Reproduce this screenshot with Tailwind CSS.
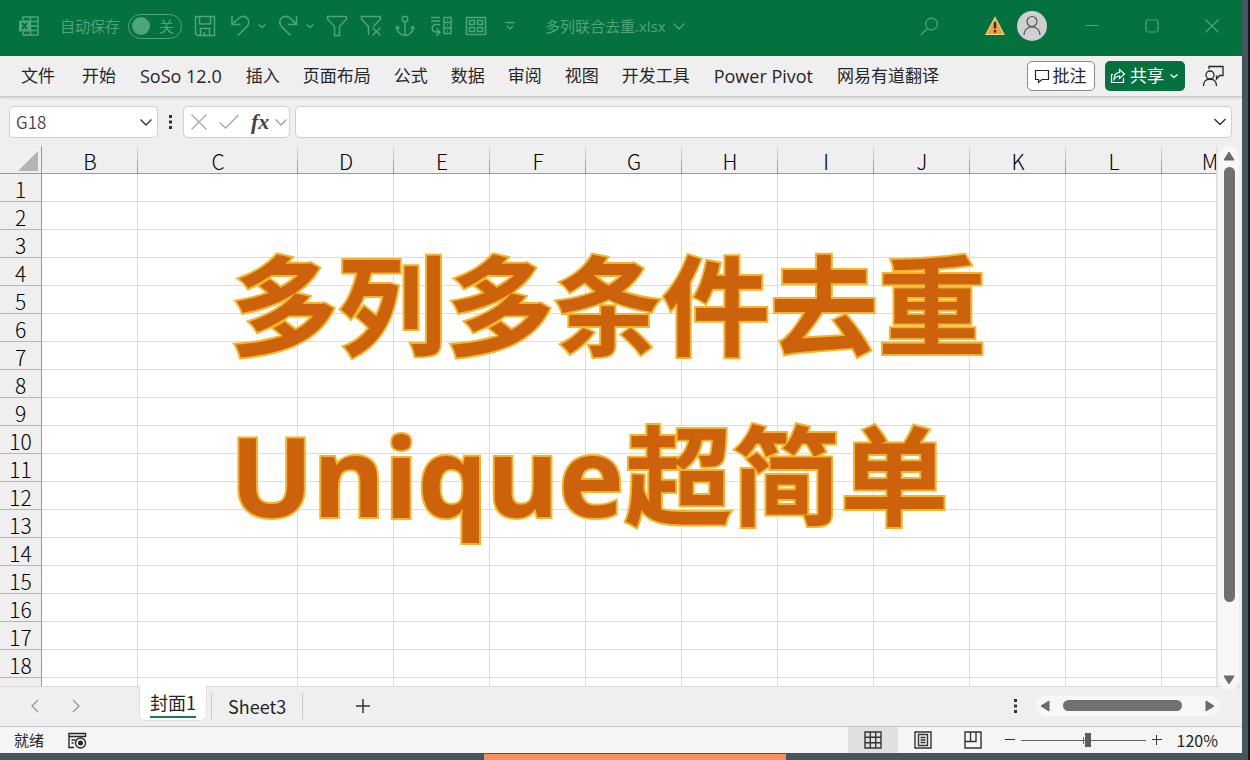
<!DOCTYPE html>
<html lang="zh">
<head>
    <meta charset="UTF-8">
    <meta name="viewport" content="width=device-width, initial-scale=1.0">
    <title>多列联合去重.xlsx - Excel</title>
    <script src="https://cdn.jsdelivr.net/npm/@tailwindcss/browser@4"></script>
</head>
<body class="h-screen overflow-hidden bg-[#44565f] font-['Open_Sans','Noto_Sans_CJK_SC',sans-serif] text-[#262626]">
<div class="relative flex h-full border-r-2 border-[#15191b] pr-[6px] pb-[7px]">
<div class="flex min-w-0 flex-1 flex-col bg-[#efefef]">

    <!-- 标题栏 -->
    <header class="flex h-14 shrink-0 items-center bg-[#05713f] pb-1 pl-[18px] text-[15px] text-[#4da57a]">
        <svg class="size-[22px] shrink-0" viewBox="0 0 22 22" fill="none" stroke="currentColor" stroke-width="1.5">
            <path d="M5 5V2h15v18H5v-3M12.500 2v18M5 6.500h15M12 11h8M5 15.500h15"/>
            <path d="M1 5.500h11v11H1z" fill="currentColor" stroke="none"/>
            <path d="m4 8 5 6M9 8l-5 6" stroke="#05713f" stroke-width="2"/>
        </svg>
        <label for="autosave" class="ml-5 shrink-0">自动保存</label>
        <button id="autosave" role="switch" aria-checked="false" class="ml-2 flex h-[25px] w-[54px] shrink-0 items-center justify-between rounded-full border border-[#4da57a] pr-[7px] pl-[3px]">
            <span class="size-[18px] rounded-full bg-[#4da57a]"></span><span>关</span>
        </button>
        <button class="ml-3 shrink-0" aria-label="保存">
            <svg class="size-[22px]" viewBox="0 0 22 22" fill="none" stroke="currentColor" stroke-width="1.500"><path d="M1.500 1.500h19v19h-17l-2-2zM5.500 1.500V9h11V1.500M6.500 20.500v-7h9v7M10 17v3.500"/></svg>
        </button>
        <button class="ml-[14px] shrink-0" aria-label="撤消">
            <svg class="size-[22px]" viewBox="0 0 22 22" fill="none" stroke="currentColor" stroke-width="1.600"><path d="M2 1v8.500h8.500M2 9.500 9 3c3-2.500 6.500-2 8.500.5s1.500 6-.5 8L8 20.500"/></svg>
        </button>
        <button class="ml-[6px] shrink-0" aria-label="撤消列表">
            <svg class="size-2" viewBox="0 0 8 8" fill="none" stroke="currentColor" stroke-width="1.500"><path d="m.5 2.500 3.500 3 3.500-3"/></svg>
        </button>
        <button class="ml-3 shrink-0" aria-label="恢复">
            <svg class="size-[22px]" viewBox="0 0 22 22" fill="none" stroke="currentColor" stroke-width="1.600"><path d="M18.500 1v8.500H10M18.500 9.500 12 3C9 .5 5 1 3 3.500s-1.500 6 .5 8l9 9"/></svg>
        </button>
        <button class="ml-[6px] shrink-0" aria-label="恢复列表">
            <svg class="size-2" viewBox="0 0 8 8" fill="none" stroke="currentColor" stroke-width="1.500"><path d="m.5 2.500 3.500 3 3.500-3"/></svg>
        </button>
        <button class="ml-3 shrink-0" aria-label="筛选">
            <svg class="size-[22px]" viewBox="0 0 22 22" fill="none" stroke="currentColor" stroke-width="1.500"><path d="M1.500 1.500h19V4l-7 7.500v9H8.500v-9L1.500 4z"/></svg>
        </button>
        <button class="ml-3 shrink-0" aria-label="清除筛选">
            <svg class="size-[22px]" viewBox="0 0 22 22" fill="none" stroke="currentColor" stroke-width="1.500"><path d="M8.500 20v-8.500L1.500 4V1.500h19V4l-7 7.500M12.500 12.500l8 8M20.500 12.500l-8 8"/></svg>
        </button>
        <button class="ml-3 shrink-0" aria-label="定位">
            <svg class="size-[22px]" viewBox="0 0 22 22" fill="none" stroke="currentColor" stroke-width="1.500"><circle cx="11" cy="4" r="2.800"/><path d="M11 7v13.500M3 12c0 6 3.500 8 8 8.500 4.500-.5 8-2.500 8-8.500M2 14.500l1-3 3 2M20 14.500l-1-3-3 2"/></svg>
        </button>
        <button class="ml-[14px] shrink-0" aria-label="转置">
            <svg class="size-[22px]" viewBox="0 0 22 22" fill="none" stroke="currentColor" stroke-width="1.500"><path d="M1 2.500h9M1 6h9M14 2.500h7v16h-7zM14 7.500h7M14 13h7M17 5h1M17 10.300h1M17 15.700h1M10 9.500H6c-5 0-5 7.500 0 7.500h3M6.500 13.500l3.500 3.500-3.500 4"/></svg>
        </button>
        <button class="ml-[13px] shrink-0" aria-label="冻结窗格">
            <svg class="size-[22px]" viewBox="0 0 22 22" fill="none" stroke="currentColor" stroke-width="1.500"><path d="M1.500 2.500h19v17h-19zM4.500 5.500h5v4h-5zM12.500 5.500h5v4h-5zM4.500 12.500h5v4h-5zM12.500 12.500h5v4h-5z"/></svg>
        </button>
        <button class="ml-[18px] shrink-0" aria-label="自定义快速访问工具栏">
            <svg class="size-[10px]" viewBox="0 0 10 10" fill="none" stroke="currentColor" stroke-width="1.300"><path d="M.5 1.500h9M2 5l3 3 3-3"/></svg>
        </button>
        <button class="ml-[30px] flex shrink-0 items-center gap-[7px]">多列联合去重.xlsx
            <svg class="size-3" viewBox="0 0 12 12" fill="none" stroke="currentColor" stroke-width="1.300"><path d="m.5 3.500 5.500 5.500 5.500-5.500"/></svg>
        </button>
        <div class="ml-auto flex shrink-0 items-center">
            <button aria-label="搜索">
                <svg class="size-[19px]" viewBox="0 0 19 19" fill="none" stroke="currentColor" stroke-width="1.200"><circle cx="11.500" cy="7" r="5.800"/><path d="M7.500 11.500.8 18"/></svg>
            </button>
            <svg class="ml-[46px] size-5" viewBox="0 0 20 20"><path d="M10 1.500 19 18.500H1z" fill="#f2a238" stroke="#eecf8b" stroke-width="1.200"/><path d="M10 6v6.500M10 14v2.500" stroke="#3c2b13" stroke-width="2.400"/></svg>
            <button class="ml-3 size-[30px] rounded-full bg-[#d0d0d0] text-[#555]" aria-label="帐户">
                <svg class="size-[30px]" viewBox="0 0 30 30" fill="none" stroke="currentColor" stroke-width="1.200"><circle cx="15" cy="10.500" r="5"/><path d="M7 24c0-4.500 3-8 8-8s8 3.500 8 8"/></svg>
            </button>
            <button class="ml-[22px] flex w-[46px] justify-center" aria-label="最小化">
                <svg class="size-[14px]" viewBox="0 0 14 14" stroke="currentColor"><path d="M.5 6.500h13"/></svg>
            </button>
            <button class="ml-[14px] flex w-[46px] justify-center" aria-label="最大化">
                <svg class="size-[14px]" viewBox="0 0 14 14" fill="none" stroke="currentColor" stroke-width="1.200"><rect x="1" y="1" width="12" height="12" rx="1.500"/></svg>
            </button>
            <button class="mr-[7px] ml-[14px] flex w-[46px] justify-center" aria-label="关闭">
                <svg class="size-[14px]" viewBox="0 0 14 14" fill="none" stroke="currentColor" stroke-width="1.200"><path d="m.5.5 13 13M13.500.5l-13 13"/></svg>
            </button>
        </div>
    </header>

    <!-- 功能区选项卡 -->
    <nav class="relative z-10 flex h-[41px] shrink-0 items-center border-b border-[#c9c9c9] bg-[#efefef] pl-[21px] text-[17px] whitespace-nowrap shadow">
        <div class="flex items-center gap-[23px]">
            <button class="mr-1">文件</button>
            <button>开始</button>
            <button class="px-px text-lg">SoSo 12.0</button>
            <button>插入</button>
            <button>页面布局</button>
            <button>公式</button>
            <button>数据</button>
            <button>审阅</button>
            <button>视图</button>
            <button>开发工具</button>
            <button class="px-px text-lg">Power Pivot</button>
            <button>网易有道翻译</button>
        </div>
        <div class="mr-[18px] ml-auto flex items-center">
            <button class="flex h-[30px] w-[68px] items-center justify-center gap-[3px] rounded-[5px] border border-[#8a8a8a] bg-white pr-[2px]">
                <svg class="size-4" viewBox="0 0 16 16" fill="none" stroke="currentColor" stroke-width="1.200"><path d="M1.500 2.500h13v9H8L4.500 14.500v-3h-3z"/></svg>批注
            </button>
            <button class="ml-[10px] flex h-[30px] w-20 items-center justify-center gap-1 rounded-[5px] bg-[#05713f] pr-[2px] text-white">
                <svg class="size-4" viewBox="0 0 16 16" fill="none" stroke="currentColor" stroke-width="1.200"><path d="M3 6.500H1.500v8h12V10M9.500 1.500 14.500 6l-5 4.500V8C7 8 5.500 9 4 11.500 4 7.500 6 4.500 9.500 4.500z"/></svg>共享
                <svg class="ml-[2px] size-2" viewBox="0 0 8 8" fill="none" stroke="currentColor" stroke-width="1.300"><path d="m.5 2.500 3.500 3 3.500-3"/></svg>
            </button>
            <button class="ml-[17px]" aria-label="协作">
                <svg class="size-[22px]" viewBox="0 0 22 22" fill="none" stroke="currentColor" stroke-width="1.300"><circle cx="8" cy="10" r="4"/><path d="M1.500 21c0-4 2.500-7 6.500-7s6.500 3 6.500 7M7 4V1.500h14v9h-3.500L14.500 14v-3.500"/></svg>
            </button>
        </div>
    </nav>

    <!-- 编辑栏 -->
    <div class="flex h-[49px] shrink-0 items-center pr-[10px] pl-[9px]">
        <div class="flex h-8 w-[149px] shrink-0 items-center rounded-[5px] border border-[#d0d0d0] bg-white pr-[5px] pl-[6px]">
            <input aria-label="名称框" value="G18" class="min-w-0 flex-1 font-['Noto_Sans_CJK_SC',sans-serif] text-[17px] font-[350] text-[#444] outline-none">
            <button aria-label="名称列表"><svg class="size-3" viewBox="0 0 12 12" fill="none" stroke="#333" stroke-width="1.400"><path d="m.5 3.500 5.500 5.500 5.500-5.500"/></svg></button>
        </div>
        <svg class="mx-[11px] h-4 w-[3px] shrink-0" viewBox="0 0 3 16" fill="#333"><path d="M0 1h3v3H0zM0 6.500h3v3H0zM0 12h3v3H0z"/></svg>
        <div class="flex h-8 w-[107px] shrink-0 items-center rounded-[5px] border border-[#d0d0d0] bg-white pr-[2px] pl-[7px]">
            <button aria-label="取消"><svg class="size-4" viewBox="0 0 16 16" fill="none" stroke="#aaa" stroke-width="1.400"><path d="m.5.5 15 15M15.500.5l-15 15"/></svg></button>
            <button class="ml-3" aria-label="输入"><svg class="h-4 w-5" viewBox="0 0 20 16" fill="none" stroke="#aaa" stroke-width="1.400"><path d="m.5 8.500 6 5.500 13-13"/></svg></button>
            <button class="ml-3 font-['Liberation_Serif',serif] text-[22px] leading-6 font-bold text-[#444] italic">fx</button>
            <button class="ml-auto" aria-label="函数列表"><svg class="size-3" viewBox="0 0 12 12" fill="none" stroke="#999" stroke-width="1.200"><path d="m.5 3.500 5.500 5.500 5.500-5.500"/></svg></button>
        </div>
        <div class="ml-[5px] flex h-8 min-w-0 flex-1 items-center rounded-[5px] border border-[#d0d0d0] bg-white pr-[5px] pl-2">
            <input aria-label="编辑栏" class="min-w-0 flex-1 text-[17px] outline-none">
            <button aria-label="展开编辑栏"><svg class="size-3" viewBox="0 0 12 12" fill="none" stroke="#333" stroke-width="1.400"><path d="m.5 3 5.500 5.500L11.500 3"/></svg></button>
        </div>
    </div>

    <!-- 工作表 -->
    <main class="flex min-h-0 flex-1">
        <div class="relative min-w-0 flex-1 overflow-hidden border-r border-[#d9d9d9] bg-white">
            <table class="w-max table-fixed border-separate border-spacing-0 font-['Noto_Sans_CJK_SC',sans-serif] text-[21px] leading-6 text-black">
                <thead class="bg-[#efefef]">
                    <tr id="cols">
                        <th class="h-7 w-[42px] border-r border-b border-[#999] p-0" aria-label="全选">
                            <svg class="mt-[3px] ml-[18px] size-5" viewBox="0 0 20 20"><path d="M20 0v20H0z" fill="#b4b4b4"/></svg>
                        </th>
                    </tr>
                </thead>
                <tbody id="rows"></tbody>
            </table>
            <!-- 艺术字 -->
            <div class="absolute top-[76px] left-[230px] font-['Noto_Sans','Noto_Sans_CJK_SC',sans-serif] text-[108px] leading-[168px] font-bold whitespace-nowrap text-[#cd620c] [paint-order:stroke_fill] [-webkit-text-stroke:4px_#f5b428]">
                <p>多列多条件去重</p>
                <p><span class="text-[110px]">Unique</span>超简单</p>
            </div>
        </div>
        <div class="relative z-10 mr-[3px] -mb-1 ml-[2px] flex w-5 shrink-0 flex-col items-center rounded-full bg-[#f7f7f7] py-[5px]">
            <svg class="h-[10px] w-3 shrink-0" viewBox="0 0 12 10" fill="#6b6b6b" stroke="#6b6b6b" stroke-linejoin="round"><path d="m6 1 5 8H1z"/></svg>
            <div class="mt-[6px] min-h-0 w-[11px] flex-[433] rounded-full bg-[#707070]"></div>
            <div class="flex-[73]"></div>
            <svg class="h-[10px] w-3 shrink-0" viewBox="0 0 12 10" fill="#6b6b6b" stroke="#6b6b6b" stroke-linejoin="round"><path d="m6 9 5-8H1z"/></svg>
        </div>
    </main>

    <!-- 工作表标签 -->
    <div class="flex h-10 shrink-0 items-start text-lg">
        <div class="flex h-[38px] w-[139px] shrink-0 items-center gap-[26px] border-t border-[#d9d9d9] pl-[29px] text-[#999]">
            <button aria-label="上一张"><svg class="size-[14px]" viewBox="0 0 14 14" fill="none" stroke="currentColor" stroke-width="1.400"><path d="M9 1 3 7l6 6"/></svg></button>
            <button aria-label="下一张"><svg class="size-[14px]" viewBox="0 0 14 14" fill="none" stroke="currentColor" stroke-width="1.400"><path d="m4 1 6 6-6 6"/></svg></button>
        </div>
        <button class="h-[35px] shrink-0 rounded-b-[6px] border-x border-b border-[#e2e2e2] bg-white px-[10px] font-['Noto_Sans_CJK_SC',sans-serif]"><span class="block h-[30px] border-b-2 border-[#1c7a50] leading-7">封面1</span></button>
        <div class="flex h-[38px] min-w-0 flex-1 items-center border-t border-[#d9d9d9]">
            <button class="ml-1 h-[26px] border-x border-[#c8c8c8] px-4 font-['Noto_Sans_CJK_SC',sans-serif] text-lg leading-6">Sheet3</button>
            <button class="ml-[53px]" aria-label="新工作表"><svg class="size-[14px]" viewBox="0 0 14 14" stroke="#333" stroke-width="1.500"><path d="M7 0v14M0 7h14"/></svg></button>
            <svg class="mr-[18px] ml-auto h-[14px] w-[3px] shrink-0" viewBox="0 0 3 14" fill="#333"><path d="M0 0h3v3H0zM0 5.500h3v3H0zM0 11h3v3H0z"/></svg>
            <div class="mr-[22px] flex h-5 w-[185px] shrink-0 items-center rounded-full bg-[#f7f7f7] px-[5px]">
                <svg class="h-3 w-[10px]" viewBox="0 0 10 12" fill="#6b6b6b" stroke="#6b6b6b" stroke-linejoin="round"><path d="m1 6 8-5v10z"/></svg>
                <div class="ml-[13px] h-[11px] w-[119px] rounded-full bg-[#707070]"></div>
                <svg class="ml-auto h-3 w-[10px]" viewBox="0 0 10 12" fill="#6b6b6b" stroke="#6b6b6b" stroke-linejoin="round"><path d="M9 6 1 1v10z"/></svg>
            </div>
        </div>
    </div>

    <!-- 状态栏 -->
    <footer class="flex h-[27px] shrink-0 items-center border-t border-[#c4c4c4] bg-[#f5f5f5] pl-[14px] text-[15px]">
        <span>就绪</span>
        <button class="ml-6" aria-label="宏录制">
            <svg class="h-[17px] w-[19px]" viewBox="0 0 19 17" fill="none" stroke="currentColor" stroke-width="1.400"><path d="M6 15.500H1v-14h16.500V5M1 4.500h16.500M3.500 8h4M3.500 11h2"/><circle cx="12.500" cy="11" r="5"/><circle cx="12.500" cy="11" r="1.800" fill="currentColor"/></svg>
        </button>
        <div class="ml-auto flex h-full items-center">
            <button class="flex h-full w-[50px] items-center justify-center bg-[#e0e0e0]" aria-label="普通">
                <svg class="size-[18px]" viewBox="0 0 18 18" fill="none" stroke="#333" stroke-width="1.400"><path d="M1 1h16v16H1zM6.300 1v16M11.700 1v16M1 6.300h16M1 11.700h16"/></svg>
            </button>
            <button class="flex w-[50px] justify-center" aria-label="页面布局">
                <svg class="size-[18px]" viewBox="0 0 18 18" fill="none" stroke="#333" stroke-width="1.400"><path d="M1 1h16v16H1zM4.500 3.500h9v11h-9zM6.500 6.500h5M6.500 9h5M6.500 11.500h5"/></svg>
            </button>
            <button class="flex w-[50px] justify-center" aria-label="分页预览">
                <svg class="size-[18px]" viewBox="0 0 18 18" fill="none" stroke="#333" stroke-width="1.400"><path d="M1 1h16v16H1zM1 10.500h11V1M6.500 1v9.500"/></svg>
            </button>
            <button class="ml-[7px]" aria-label="缩小"><svg class="size-[10px]" viewBox="0 0 10 10" stroke="#333"><path d="M0 4.500h10"/></svg></button>
            <div class="relative ml-[6px] flex h-5 w-[125px] items-center">
                <input type="range" aria-label="显示比例" min="10" max="200" value="113" class="h-px w-full appearance-none bg-[#666] [&::-webkit-slider-thumb]:h-[14px] [&::-webkit-slider-thumb]:w-[6px] [&::-webkit-slider-thumb]:appearance-none [&::-webkit-slider-thumb]:bg-[#5c5c5c]">
                <span class="absolute left-1/2 h-[7px] w-px bg-[#666]"></span>
            </div>
            <button class="ml-[6px]" aria-label="放大"><svg class="size-[10px]" viewBox="0 0 10 10" stroke="#333"><path d="M0 4.500h10M4.500 0v10"/></svg></button>
            <button class="mr-6 ml-[15px] font-['Noto_Sans_CJK_SC',sans-serif] text-base leading-6">120%</button>
        </div>
    </footer>
</div>
<!-- 窗口后面露出的任务栏 -->
<div class="absolute bottom-0 left-[484px] h-[6px] w-[302px] bg-[#f98f63]"></div>
</div>

<script>
    const letters = 'BCDEFGHIJKLM'.split('');
    const cols = document.getElementById('cols');
    const rows = document.getElementById('rows');

    letters.forEach(c => {
        const th = document.createElement('th');
        th.scope = 'col';
        th.textContent = c;
        th.className = (c === 'C' ? 'w-[160px] min-w-[160px]' : 'w-[96px] min-w-[96px]') +
            ' h-7 border-b border-[#999] p-0 pt-[3px] font-light bg-linear-to-b from-[#ddd] to-[#999] bg-[length:1px_100%] bg-right bg-no-repeat';
        cols.appendChild(th);
    });

    // 最后一行只露出一条边，不写行号
    for (let r = 1; r <= 19; r++) {
        const tr = document.createElement('tr');
        tr.innerHTML = `<th scope="row" class="h-7 border-r border-b border-r-[#999] border-b-[#b5b5b5] bg-[#efefef] p-0 pt-[3px] font-light">${r < 19 ? r : ''}</th>` +
            letters.map(() => '<td class="border-r border-b border-[#dcdcdc] bg-white p-0"></td>').join('');
        rows.appendChild(tr);
    }
</script>
</body>
</html>
